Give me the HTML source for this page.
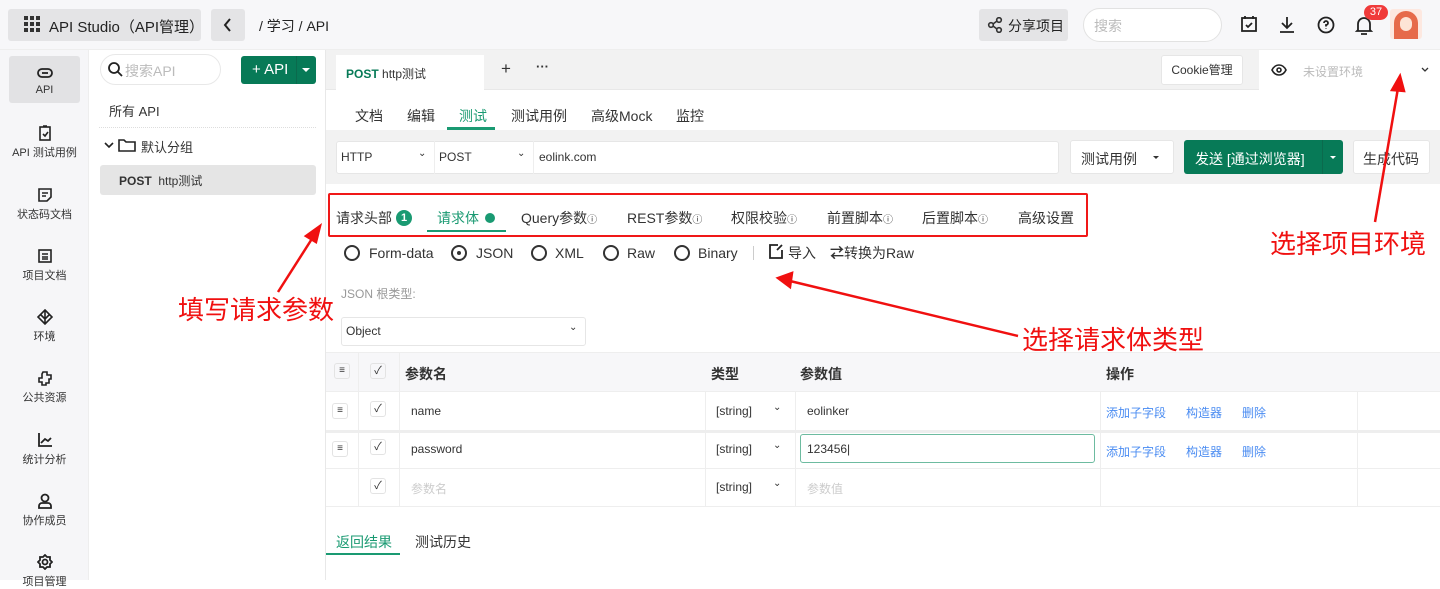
<!DOCTYPE html>
<html><head><meta charset="utf-8">
<style>
*{box-sizing:border-box;margin:0;padding:0}
body{width:1440px;height:580px;overflow:hidden;font-family:"Liberation Sans","Noto Sans CJK SC",sans-serif;font-size:13px;color:#333;background:#fff;position:relative}
.abs{position:absolute}
.top{left:0;top:0;width:1440px;height:50px;background:#f7f7f9;border-bottom:1px solid #eee}
.btn{background:#e4e4e6;border-radius:3px}
.side{left:0;top:50px;width:89px;height:530px;background:#f6f6f8;border-right:1px solid #eee}
.side .it{position:absolute;left:0;width:89px;text-align:center;font-size:11px;color:#333}
.side .ic{display:block;margin:0 auto 3px;width:16px;height:16px}
.tree{left:89px;top:50px;width:237px;height:530px;background:#fff;border-right:1px solid #e8e8e8}
.gray{background:#f2f2f2}
.inp{background:#fff;border:1px solid #e6e6e6;border-radius:3px}
.red{color:#f01010;font-size:26px}
.tab2 span{position:absolute;top:208px;font-size:14px;color:#333}
.lnk{color:#4a8cf2;font-size:12px}
.row{border-bottom:1px solid #eee}
.chk{width:16px;height:16px;border:1px solid #e3e3e3;border-radius:3px;font-size:11px;text-align:center;line-height:14px;color:#333}
.ham{width:16px;height:16px;border:1px solid #e3e3e3;border-radius:3px;font-size:10px;text-align:center;line-height:14px}
.rad{width:16px;height:16px;border:2px solid #333;border-radius:50%}
</style></head><body>
<div class="abs top"></div>
<div class="abs btn" style="left:8px;top:9px;width:193px;height:32px"></div>
<svg class="abs" style="left:24px;top:16px" width="17" height="17"><g fill="#333"><rect x="0" y="0" width="4" height="4"/><rect x="6" y="0" width="4" height="4"/><rect x="12" y="0" width="4" height="4"/><rect x="0" y="6" width="4" height="4"/><rect x="6" y="6" width="4" height="4"/><rect x="12" y="6" width="4" height="4"/><rect x="0" y="12" width="4" height="4"/><rect x="6" y="12" width="4" height="4"/><rect x="12" y="12" width="4" height="4"/></g></svg>
<div class="abs" style="left:49px;top:16px;font-size:15px;color:#222">API Studio（API管理）</div>
<div class="abs btn" style="left:211px;top:9px;width:34px;height:32px"></div>
<svg class="abs" style="left:222px;top:17px" width="12" height="16"><path d="M8 2 L3 8 L8 14" stroke="#222" stroke-width="2" fill="none"/></svg>
<div class="abs" style="left:259px;top:16px;font-size:14px;color:#222">/ 学习 / API</div>
<div class="abs btn" style="left:979px;top:9px;width:89px;height:32px"></div>
<svg class="abs" style="left:987px;top:17px" width="16" height="16"><circle cx="12" cy="3" r="2.3" fill="none" stroke="#333" stroke-width="1.6"/><circle cx="4" cy="8" r="2.3" fill="none" stroke="#333" stroke-width="1.6"/><circle cx="12" cy="13" r="2.3" fill="none" stroke="#333" stroke-width="1.6"/><path d="M6 7 L10 4 M6 9 L10 12" stroke="#333" stroke-width="1.6"/></svg>
<div class="abs" style="left:1008px;top:16px;font-size:14px;color:#222">分享项目</div>
<div class="abs" style="left:1083px;top:8px;width:139px;height:34px;border:1px solid #e2e2e2;border-radius:17px;background:#fff"></div>
<div class="abs" style="left:1094px;top:16px;font-size:14px;color:#bbb">搜索</div>
<svg class="abs" style="left:1240px;top:15px" width="140" height="20" fill="none" stroke="#222" stroke-width="1.8"><rect x="2" y="3" width="14" height="13"/><path d="M5 1v3M13 1v3M6 10l2 2 4-4"/><path d="M47 2v11M42 8l5 5 5-5M40 17h14"/><circle cx="86" cy="10" r="7.5"/><path d="M84 8a2 2 0 1 1 2 2v1.5M86 13.5v.5"/><path d="M127 19h-6M130 15V9a6 6 0 0 0-12 0v6l-1 1h14z"/></svg>
<div class="abs" style="left:1364px;top:5px;width:24px;height:15px;background:#f03b3b;border-radius:8px;color:#fff;font-size:11px;text-align:center;line-height:15px">37</div>
<div class="abs" style="left:1390px;top:9px;width:32px;height:30px;background:#fde8e0;border-radius:3px;overflow:hidden"><div style="position:absolute;left:4px;top:2px;width:24px;height:30px;background:#e66a4a;border-radius:12px 12px 2px 2px"></div><div style="position:absolute;left:10px;top:8px;width:12px;height:14px;background:#fde4d6;border-radius:6px"></div></div>

<div class="abs side"></div>
<div class="abs" style="left:9px;top:56px;width:71px;height:47px;background:#e2e2e4;border-radius:3px"></div>
<div class="side abs" style="background:none;border:none">
<div class="it" style="top:15px"><svg class="ic" viewBox="0 0 16 16" fill="none" stroke="#222" stroke-width="1.8"><rect x="1" y="4" width="14" height="8" rx="4"/><path d="M5 8h6"/></svg>API</div>
<div class="it" style="top:75px"><svg class="ic" viewBox="0 0 16 16" fill="none" stroke="#222" stroke-width="1.6"><rect x="3" y="2" width="10" height="13"/><path d="M6 1h4M6 9l2 2 3-4"/></svg>API 测试用例</div>
<div class="it" style="top:137px"><svg class="ic" viewBox="0 0 16 16" fill="none" stroke="#222" stroke-width="1.6"><path d="M2 2h12v8l-4 4H2z M5 6h6M5 9h4"/></svg>状态码文档</div>
<div class="it" style="top:198px"><svg class="ic" viewBox="0 0 16 16" fill="none" stroke="#222" stroke-width="1.6"><rect x="2" y="2" width="12" height="12"/><path d="M5 6h6M5 9h6M5 11h6"/></svg>项目文档</div>
<div class="it" style="top:259px"><svg class="ic" viewBox="0 0 16 16" fill="none" stroke="#222" stroke-width="1.6"><path d="M8 1l7 7-7 7-7-7z M3 5l5 5 5-5 M8 1v14"/></svg>环境</div>
<div class="it" style="top:320px"><svg class="ic" viewBox="0 0 16 16" fill="none" stroke="#222" stroke-width="1.6"><path d="M6 2h4v3h4v4h-2v4H9v2H5v-3H2V8h3V4z"/></svg>公共资源</div>
<div class="it" style="top:382px"><svg class="ic" viewBox="0 0 16 16" fill="none" stroke="#222" stroke-width="1.8"><path d="M2 1v13h13M4 11l4-4 3 2 3-3"/></svg>统计分析</div>
<div class="it" style="top:443px"><svg class="ic" viewBox="0 0 16 16" fill="none" stroke="#222" stroke-width="1.8"><circle cx="8" cy="5" r="3.5"/><path d="M2 15v-2a3 3 0 0 1 3-3h6a3 3 0 0 1 3 3v2z"/></svg>协作成员</div>
<div class="it" style="top:504px"><svg class="ic" viewBox="0 0 16 16" fill="none" stroke="#222" stroke-width="1.8"><circle cx="8" cy="8" r="2.5"/><path d="M8 1l2 2h3v3l2 2-2 2v3h-3l-2 2-2-2H3v-3L1 8l2-2V3h3z"/></svg>项目管理</div>
</div>

<div class="abs tree"></div>
<div class="abs" style="left:100px;top:54px;width:121px;height:31px;border:1px solid #e8e8e8;border-radius:16px"></div>
<svg class="abs" style="left:107px;top:61px" width="16" height="16" fill="none" stroke="#222" stroke-width="1.8"><circle cx="7" cy="7" r="5"/><path d="M11 11l4 4"/></svg>
<div class="abs" style="left:125px;top:61px;font-size:14px;color:#bbb">搜索API</div>
<div class="abs" style="left:241px;top:56px;width:75px;height:28px;background:#077a57;border-radius:3px"></div>
<div class="abs" style="left:252px;top:61px;font-size:15px;color:#fff">+ API</div>
<div class="abs" style="left:296px;top:56px;width:1px;height:28px;background:#0b6a4d"></div>
<div class="abs" style="left:302px;top:68px;border:4px solid transparent;border-top-color:#fff"></div>
<div class="abs" style="left:109px;top:101px;font-size:13px">所有 API</div>
<div class="abs" style="left:99px;top:127px;width:217px;border-top:1px dotted #ddd"></div>
<svg class="abs" style="left:103px;top:137px" width="34" height="16" fill="none" stroke="#222" stroke-width="1.6"><path d="M2 6l4 4 4-4"/><path d="M16 3h5l2 2h9v9H16z"/></svg>
<div class="abs" style="left:141px;top:137px;font-size:13px">默认分组</div>
<div class="abs" style="left:100px;top:165px;width:216px;height:30px;background:#e5e5e5;border-radius:3px"></div>
<div class="abs" style="left:119px;top:172px;font-size:12px"><b>POST</b>&nbsp; http测试</div>

<div class="abs gray" style="left:326px;top:50px;width:1114px;height:40px;border-bottom:1px solid #e8e8e8"></div>
<div class="abs" style="left:336px;top:55px;width:148px;height:36px;background:#fff"></div>
<div class="abs" style="left:346px;top:65px;font-size:12px;color:#077a57"><b>POST</b> <span style="color:#333">http测试</span></div>
<div class="abs" style="left:501px;top:59px;font-size:17px">+</div>
<div class="abs" style="left:536px;top:59px;font-size:13px;font-weight:bold">···</div>
<div class="abs" style="left:1161px;top:55px;width:82px;height:30px;background:#fff;border:1px solid #e6e6e6;border-radius:3px;font-size:12px;text-align:center;line-height:28px">Cookie管理</div>
<div class="abs" style="left:1259px;top:50px;width:181px;height:40px;background:#fff"></div>
<svg class="abs" style="left:1271px;top:63px" width="16" height="14" fill="none" stroke="#222" stroke-width="1.6"><path d="M1 7c2-4 5-5 7-5s5 1 7 5c-2 4-5 5-7 5s-5-1-7-5z"/><circle cx="8" cy="7" r="2"/></svg>
<div class="abs" style="left:1303px;top:63px;font-size:12px;color:#bbb">未设置环境</div>
<svg class="abs" style="left:1420px;top:66px" width="10" height="8" fill="none" stroke="#333" stroke-width="1.3"><path d="M2 2l3 3 3-3"/></svg>

<div class="abs" style="left:355px;top:106px;font-size:14px">文档</div>
<div class="abs" style="left:407px;top:106px;font-size:14px">编辑</div>
<div class="abs" style="left:459px;top:106px;font-size:14px;color:#1a9a72">测试</div>
<div class="abs" style="left:447px;top:127px;width:48px;height:3px;background:#1a9a72"></div>
<div class="abs" style="left:511px;top:106px;font-size:14px">测试用例</div>
<div class="abs" style="left:591px;top:106px;font-size:14px">高级Mock</div>
<div class="abs" style="left:676px;top:106px;font-size:14px">监控</div>

<div class="abs gray" style="left:326px;top:130px;width:1114px;height:54px"></div>
<div class="abs inp" style="left:336px;top:141px;width:723px;height:33px"></div>
<div class="abs" style="left:434px;top:141px;width:1px;height:33px;background:#eee"></div>
<div class="abs" style="left:533px;top:141px;width:1px;height:33px;background:#eee"></div>
<div class="abs" style="left:341px;top:150px;font-size:12px">HTTP</div>
<div class="abs" style="left:439px;top:150px;font-size:12px">POST</div>
<div class="abs" style="left:418px;top:148px;font-size:10px">⌄</div>
<div class="abs" style="left:517px;top:148px;font-size:10px">⌄</div>
<div class="abs" style="left:539px;top:150px;font-size:12px">eolink.com</div>
<div class="abs inp" style="left:1070px;top:140px;width:104px;height:34px"></div>
<div class="abs" style="left:1081px;top:149px;font-size:14px">测试用例</div>
<div class="abs" style="left:1153px;top:156px;border:3.5px solid transparent;border-top-color:#333"></div>
<div class="abs" style="left:1184px;top:140px;width:159px;height:34px;background:#077a57;border-radius:3px"></div>
<div class="abs" style="left:1195px;top:149px;font-size:14px;color:#fff">发送 [通过浏览器]</div>
<div class="abs" style="left:1322px;top:140px;width:1px;height:34px;background:#0b6a4d"></div>
<div class="abs" style="left:1330px;top:156px;border:3.5px solid transparent;border-top-color:#fff"></div>
<div class="abs inp" style="left:1353px;top:140px;width:77px;height:34px"></div>
<div class="abs" style="left:1363px;top:149px;font-size:14px">生成代码</div>

<div class="tab2">
<span style="left:336px">请求头部</span>
<div class="abs" style="left:396px;top:210px;width:16px;height:16px;border-radius:50%;background:#1a9a72;color:#fff;font-size:11px;text-align:center;line-height:16px;font-weight:bold">1</div>
<span style="left:437px;color:#1a9a72">请求体</span>
<div class="abs" style="left:485px;top:213px;width:10px;height:10px;border-radius:50%;background:#1a9a72"></div>
<div class="abs" style="left:427px;top:230px;width:79px;height:2px;background:#1a9a72"></div>
<span style="left:521px">Query参数<small style="font-size:10px">ⓘ</small></span>
<span style="left:627px">REST参数<small style="font-size:10px">ⓘ</small></span>
<span style="left:731px">权限校验<small style="font-size:10px">ⓘ</small></span>
<span style="left:827px">前置脚本<small style="font-size:10px">ⓘ</small></span>
<span style="left:922px">后置脚本<small style="font-size:10px">ⓘ</small></span>
<span style="left:1018px">高级设置</span>
</div>
<div class="abs" style="left:328px;top:193px;width:760px;height:44px;border:2.5px solid #f01818;border-radius:2px"></div>

<div class="abs rad" style="left:344px;top:245px"></div><div class="abs" style="left:369px;top:245px;font-size:14px">Form-data</div>
<div class="abs rad" style="left:451px;top:245px"></div><div class="abs" style="left:457px;top:251px;width:4px;height:4px;border-radius:50%;background:#333"></div><div class="abs" style="left:476px;top:245px;font-size:14px">JSON</div>
<div class="abs rad" style="left:531px;top:245px"></div><div class="abs" style="left:555px;top:245px;font-size:14px">XML</div>
<div class="abs rad" style="left:603px;top:245px"></div><div class="abs" style="left:627px;top:245px;font-size:14px">Raw</div>
<div class="abs rad" style="left:674px;top:245px"></div><div class="abs" style="left:698px;top:245px;font-size:14px">Binary</div>
<div class="abs" style="left:753px;top:246px;width:1px;height:14px;background:#ccc"></div>
<svg class="abs" style="left:769px;top:244px" width="14" height="15" fill="none" stroke="#222" stroke-width="1.8"><path d="M9 1H1v13h12V6M8 6l5-5"/></svg>
<div class="abs" style="left:788px;top:243px;font-size:14px">导入</div>
<div class="abs" style="left:830px;top:243px;font-size:14px"><b>⇄</b>转换为Raw</div>
<div class="abs" style="left:341px;top:285px;font-size:12px;color:#999">JSON 根类型:</div>
<div class="abs inp" style="left:341px;top:317px;width:245px;height:29px"></div>
<div class="abs" style="left:346px;top:324px;font-size:12px">Object</div>
<div class="abs" style="left:569px;top:322px;font-size:10px">⌄</div>

<div class="abs" style="left:326px;top:352px;width:1114px;height:40px;background:#f7f7f9;border-top:1px solid #eee;border-bottom:1px solid #eee"></div>
<div class="abs row" style="left:326px;top:392px;width:1114px;height:39px"></div>
<div class="abs row" style="left:326px;top:431px;width:1114px;height:38px;border-top:2px solid #eee"></div>
<div class="abs row" style="left:326px;top:469px;width:1114px;height:38px"></div>
<div class="abs" style="left:358px;top:352px;width:1px;height:155px;background:#eee"></div>
<div class="abs" style="left:399px;top:352px;width:1px;height:155px;background:#eee"></div>
<div class="abs" style="left:705px;top:392px;width:1px;height:115px;background:#eee"></div>
<div class="abs" style="left:795px;top:392px;width:1px;height:115px;background:#eee"></div>
<div class="abs" style="left:1100px;top:392px;width:1px;height:115px;background:#eee"></div>
<div class="abs" style="left:1357px;top:392px;width:1px;height:115px;background:#eee"></div>
<div class="abs ham" style="left:334px;top:363px">≡</div><div class="abs chk" style="left:370px;top:363px">✓</div>
<div class="abs" style="left:405px;top:364px;font-size:14px;font-weight:bold">参数名</div>
<div class="abs" style="left:711px;top:364px;font-size:14px;font-weight:bold">类型</div>
<div class="abs" style="left:800px;top:364px;font-size:14px;font-weight:bold">参数值</div>
<div class="abs" style="left:1106px;top:364px;font-size:14px;font-weight:bold">操作</div>

<div class="abs ham" style="left:332px;top:403px">≡</div><div class="abs chk" style="left:370px;top:401px">✓</div>
<div class="abs" style="left:411px;top:404px;font-size:12px">name</div>
<div class="abs" style="left:716px;top:404px;font-size:12px">[string]</div><div class="abs" style="left:773px;top:402px;font-size:10px">⌄</div>
<div class="abs" style="left:807px;top:404px;font-size:12px">eolinker</div>
<div class="abs lnk" style="left:1106px;top:404px">添加子字段</div><div class="abs lnk" style="left:1186px;top:404px">构造器</div><div class="abs lnk" style="left:1242px;top:404px">删除</div>

<div class="abs ham" style="left:332px;top:441px">≡</div><div class="abs chk" style="left:370px;top:439px">✓</div>
<div class="abs" style="left:411px;top:442px;font-size:12px">password</div>
<div class="abs" style="left:716px;top:442px;font-size:12px">[string]</div><div class="abs" style="left:773px;top:440px;font-size:10px">⌄</div>
<div class="abs" style="left:800px;top:434px;width:295px;height:29px;border:1px solid #6dbba0;border-radius:3px;background:#fff"></div>
<div class="abs" style="left:807px;top:442px;font-size:12px">123456|</div>
<div class="abs lnk" style="left:1106px;top:443px">添加子字段</div><div class="abs lnk" style="left:1186px;top:443px">构造器</div><div class="abs lnk" style="left:1242px;top:443px">删除</div>

<div class="abs chk" style="left:370px;top:478px">✓</div>
<div class="abs" style="left:411px;top:480px;font-size:12px;color:#ccc">参数名</div>
<div class="abs" style="left:716px;top:480px;font-size:12px">[string]</div><div class="abs" style="left:773px;top:478px;font-size:10px">⌄</div>
<div class="abs" style="left:807px;top:480px;font-size:12px;color:#ccc">参数值</div>

<div class="abs" style="left:336px;top:532px;font-size:14px;color:#1a9a72">返回结果</div>
<div class="abs" style="left:326px;top:553px;width:74px;height:2px;background:#1a9a72"></div>
<div class="abs" style="left:415px;top:532px;font-size:14px">测试历史</div>

<div class="abs red" style="left:178px;top:290px">填写请求参数</div>
<div class="abs red" style="left:1022px;top:320px">选择请求体类型</div>
<div class="abs red" style="left:1270px;top:224px">选择项目环境</div>
<svg class="abs" style="left:0;top:0" width="1440" height="580">
<g stroke="#f01010" stroke-width="2.5" fill="#f01010">
<line x1="278" y1="292" x2="315" y2="234"/><polygon points="320,226 306,236 316,242"/>
<line x1="1018" y1="336" x2="790" y2="281"/><polygon points="778,278 792,273 790,287"/>
<line x1="1375" y1="222" x2="1398" y2="88"/><polygon points="1400,76 1392,90 1404,91"/>
</g></svg>
</body></html>
